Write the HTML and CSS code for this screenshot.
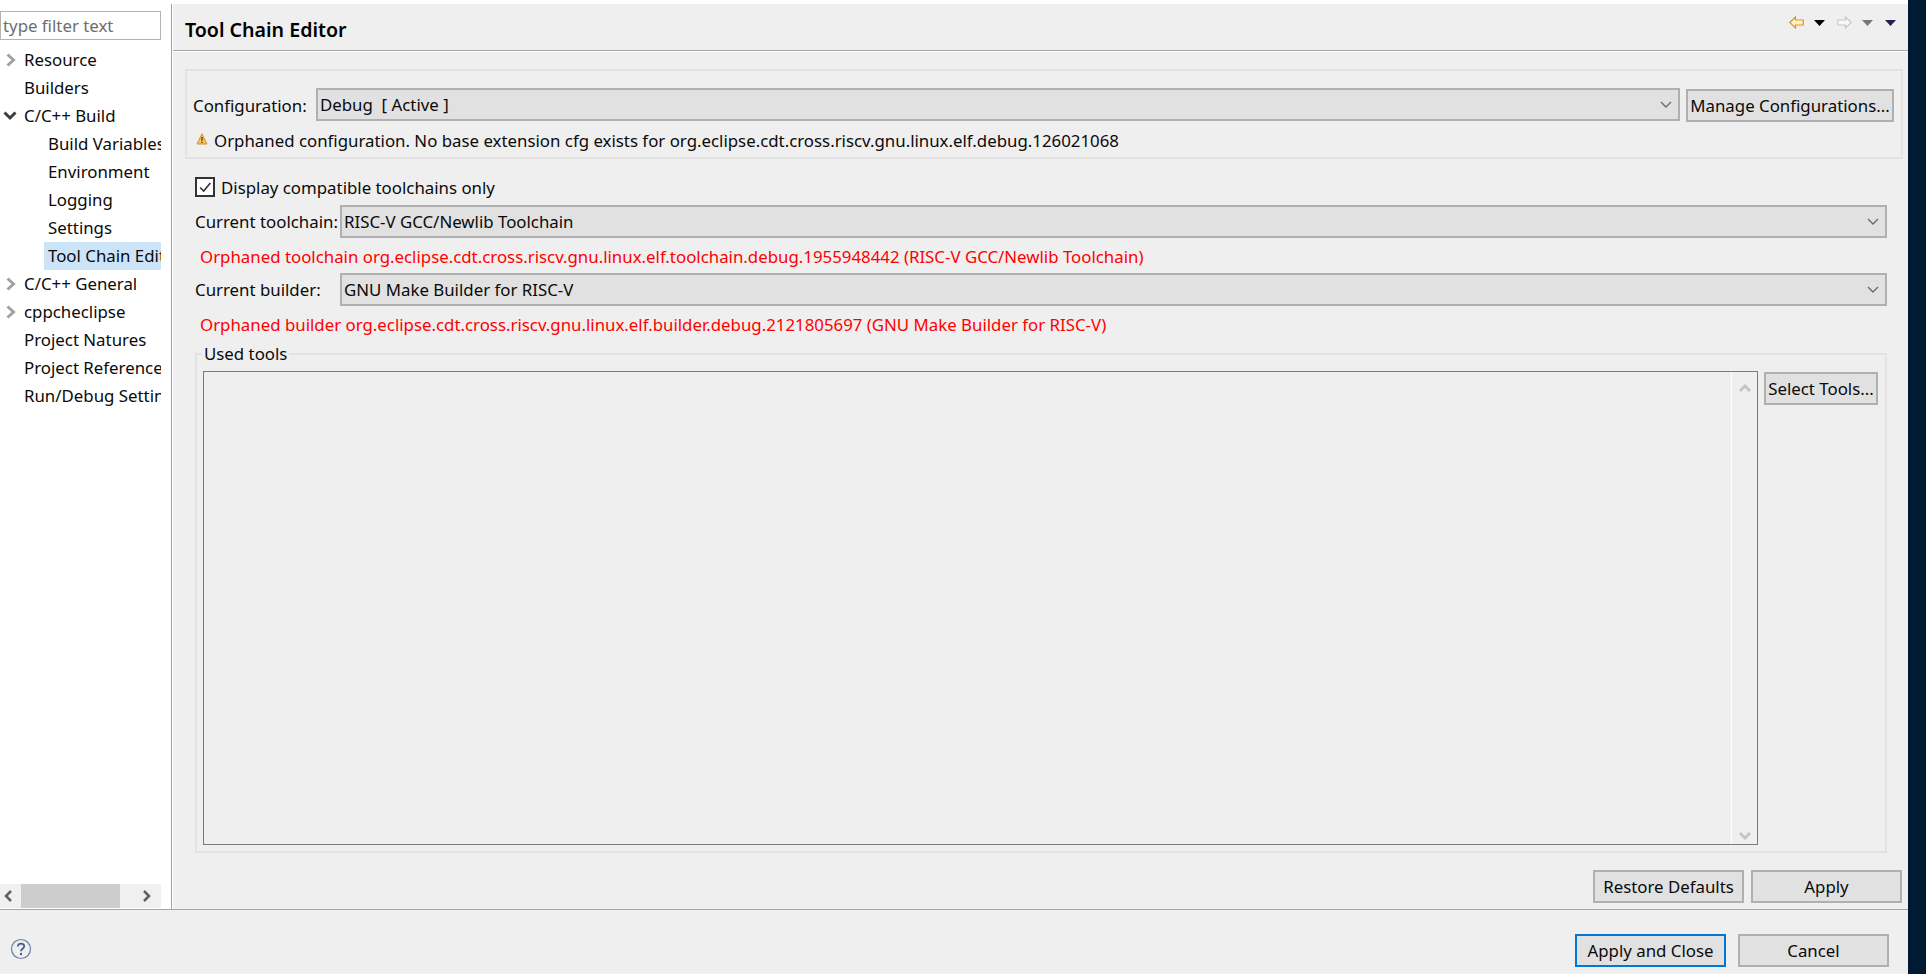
FILE: index.html
```html
<!DOCTYPE html>
<html lang="en">
<head>
<meta charset="utf-8">
<title>Tool Chain Editor</title>
<link rel="stylesheet" href="styles.css">
</head>
<body>
<div class="window">
  <div class="main">
    <aside class="side">
      <div class="filter">type filter text</div>
      <ul class="tree">
        <li class="row"><svg class="twist" viewBox="0 0 12 14"><path d="M2.500 1.500 8.500 7l-6 5.500" /></svg><span>Resource</span></li>
        <li class="row"><span>Builders</span></li>
        <li class="row"><svg class="twist open" viewBox="0 0 14 12"><path d="M1.500 2.500 7 8l5.500-5.500" /></svg><span>C/C++ Build</span></li>
        <li class="row child"><span>Build Variables</span></li>
        <li class="row child"><span>Environment</span></li>
        <li class="row child"><span>Logging</span></li>
        <li class="row child"><span>Settings</span></li>
        <li class="row child selected"><span>Tool Chain Editor</span></li>
        <li class="row"><svg class="twist" viewBox="0 0 12 14"><path d="M2.500 1.500 8.500 7l-6 5.500" /></svg><span>C/C++ General</span></li>
        <li class="row"><svg class="twist" viewBox="0 0 12 14"><path d="M2.500 1.500 8.500 7l-6 5.500" /></svg><span>cppcheclipse</span></li>
        <li class="row"><span>Project Natures</span></li>
        <li class="row"><span>Project References</span></li>
        <li class="row"><span>Run/Debug Settings</span></li>
      </ul>
      <div class="hscroll">
        <svg class="harrow left" viewBox="0 0 10 12"><path d="M8 1 3 6l5 5" /></svg>
        <div class="hthumb"></div>
        <svg class="harrow right" viewBox="0 0 10 12"><path d="M2 1l5 5-5 5" /></svg>
      </div>
    </aside>
    <main class="page">
      <header class="head">
        <h1 class="title">Tool Chain Editor</h1>
        <nav class="nav">
          <svg class="arrow" viewBox="0 0 15 13"><path class="back" d="M.8 6.500 6.500 1v3h7.700v5H6.500v3z" /></svg>
          <svg class="tri" viewBox="0 0 11 6"><path class="tri-black" d="M0 0h11L5.500 6z" /></svg>
          <svg class="arrow" viewBox="0 0 15 13"><path class="fwd" d="M14.200 6.500 8.500 1v3H.8v5h7.700v3z" /></svg>
          <svg class="tri" viewBox="0 0 11 6"><path class="tri-grey" d="M0 0h11L5.500 6z" /></svg>
          <svg class="tri menu" viewBox="0 0 11 6"><path class="tri-purple" d="M0 0h11L5.500 6z" /></svg>
        </nav>
      </header>
      <div class="content">
        <section class="config">
          <div class="config-row">
            <label class="config-label">Configuration:</label>
            <div class="combo config-combo"><span>Debug&nbsp; [ Active ]</span><svg class="caret" viewBox="0 0 12 7"><path d="M1 1l5 5 5-5" /></svg></div>
            <button class="btn manage">Manage Configurations...</button>
          </div>
          <div class="warn-row">
            <svg class="warn" viewBox="0 0 12 12"><path class="warn-fill" d="M6 .8 11 11H1z" /><path class="warn-mark" d="M6 4v3.800M6 8.800v1.200" /></svg>
            <span>Orphaned configuration. No base extension cfg exists for org.eclipse.cdt.cross.riscv.gnu.linux.elf.debug.126021068</span>
          </div>
        </section>
        <div class="form">
          <div class="check-row">
            <span class="check"><svg viewBox="0 0 18 18"><path d="M3.500 9.500 7.500 13.500 15 4.500" /></svg></span>
            <span class="check-text">Display compatible toolchains only</span>
          </div>
          <div class="field">
            <label>Current toolchain:</label>
            <div class="combo"><span>RISC-V GCC/Newlib Toolchain</span><svg class="caret" viewBox="0 0 12 7"><path d="M1 1l5 5 5-5" /></svg></div>
          </div>
          <div class="error">Orphaned toolchain org.eclipse.cdt.cross.riscv.gnu.linux.elf.toolchain.debug.1955948442 (RISC-V GCC/Newlib Toolchain)</div>
          <div class="field">
            <label>Current builder:</label>
            <div class="combo"><span>GNU Make Builder for RISC-V</span><svg class="caret" viewBox="0 0 12 7"><path d="M1 1l5 5 5-5" /></svg></div>
          </div>
          <div class="error">Orphaned builder org.eclipse.cdt.cross.riscv.gnu.linux.elf.builder.debug.2121805697 (GNU Make Builder for RISC-V)</div>
          <fieldset class="tools">
            <legend>Used tools</legend>
            <div class="tools-inner">
              <div class="listbox">
                <div class="list-area"></div>
                <div class="vscroll">
                  <svg class="varrow" viewBox="0 0 12 8"><path d="M1 7l5-5 5 5" /></svg>
                  <svg class="varrow" viewBox="0 0 12 8"><path d="M1 1l5 5 5-5" /></svg>
                </div>
              </div>
              <button class="btn select">Select Tools...</button>
            </div>
          </fieldset>
        </div>
        <div class="page-actions">
          <button class="btn wide">Restore Defaults</button>
          <button class="btn wide">Apply</button>
        </div>
      </div>
    </main>
  </div>
  <footer class="footer">
    <svg class="help" viewBox="0 0 22 22"><circle class="help-ring" cx="11" cy="11" r="9.500" /><path class="help-q" d="M7.800 8.500C8 6.500 9.400 5.600 11 5.600c1.900 0 3.200 1.100 3.200 2.700 0 2.400-3.200 2.500-3.200 5" /><circle class="help-dot" cx="11" cy="16" r="1.200" /></svg>
    <div class="dialog-actions">
      <button class="btn wide default">Apply and Close</button>
      <button class="btn wide">Cancel</button>
    </div>
  </footer>
</div>
</body>
</html>
```
FILE: styles.css
```css
* { box-sizing: border-box; }
html, body { margin: 0; height: 100%; overflow: hidden; }
body {
  background: #001a33;
  font-family: "Noto Sans", "Open Sans", sans-serif;
  font-size: 16.84px;
  color: #0a0a0a;
}
.window {
  width: 1908px;
  height: 974px;
  background: #efefef;
  border-top: 4px solid #fff;
  display: flex;
  flex-direction: column;
}
.main { display: flex; height: 905px; }

/* Sidebar */
.side {
  width: 173px;
  flex: none;
  background: #fff;
  border-right: 1px solid #fff;
  box-shadow: inset -1px 0 0 #a0a0a0;
  padding-top: 7px;
  display: flex;
  flex-direction: column;
}
.filter {
  width: 161px;
  height: 29px;
  border: 1px solid #b4b4b4;
  color: #6d6d6d;
  padding-left: 2px;
  line-height: 28px;
  white-space: nowrap;
  overflow: hidden;
}
.tree { list-style: none; margin: 6px 0 0; padding: 0; width: 161px; overflow: hidden; }
.row {
  height: 28px;
  line-height: 27px;
  padding-left: 24px;
  position: relative;
  white-space: nowrap;
  overflow: hidden;
}
.row.child { padding-left: 48px; }
.row.selected { margin-left: 44px; padding-left: 4px; background: #cce4f8; }
.twist {
  position: absolute;
  left: 5px;
  top: 7px;
  width: 12px;
  height: 14px;
  fill: none;
  stroke: #a2a2a2;
  stroke-width: 3;
}
.twist.open {
  left: 3px;
  top: 8px;
  width: 14px;
  height: 12px;
  stroke: #3c3c3c;
}
.hscroll {
  margin-top: auto;
  margin-bottom: 1px;
  width: 161px;
  height: 24px;
  background: #f0f0f0;
  display: flex;
  align-items: center;
}
.hthumb { width: 99px; height: 24px; background: #cdcdcd; flex: none; }
.harrow {
  width: 10px;
  height: 12px;
  flex: none;
  fill: none;
  stroke: #606060;
  stroke-width: 2.500;
}
.harrow.left { margin: 0 8px 0 3px; }
.harrow.right { margin-left: 22px; }

/* Page */
.page { flex: 1; min-width: 0; display: flex; flex-direction: column; }
.head {
  height: 47px;
  flex: none;
  display: flex;
  align-items: center;
  justify-content: space-between;
  padding: 0 12px 0 12px;
  border-bottom: 1px solid #a8a8a8;
  box-shadow: 0 1px 0 #fff;
}
.title { margin: 0; font-size: 19.6px; font-weight: 600; line-height: 26px; color: #000; padding-top: 6px; }
.nav { display: flex; align-items: center; align-self: flex-start; margin-top: 12px; }
.arrow { width: 15px; height: 13px; }
.tri { width: 11px; height: 6px; margin: 0 12px 0 10px; }
.tri.menu { margin: 0; }
.back { fill: #fff2cf; stroke: #d9971f; stroke-width: 1.200; }
.fwd { fill: #f8f8f8; stroke: #c8c8c8; stroke-width: 1.200; }
.tri-black { fill: #000; }
.tri-grey { fill: #777; }
.tri-purple { fill: #2c1c50; }

.content { flex: 1; display: flex; flex-direction: column; padding: 18px 5px 0 12px; min-height: 0; }
.config {
  height: 90px;
  flex: none;
  border: 2px solid #e2e2e2;
  padding: 16px 7px 0 6px;
}
.config-row { display: flex; align-items: center; height: 35px; }
.config-label { width: 123px; flex: none; padding-top: 1px; }
.combo {
  flex: 1;
  min-width: 0;
  height: 33px;
  background: #e1e1e1;
  border: 2px solid #b0b0b0;
  display: flex;
  align-items: center;
  justify-content: space-between;
  padding: 0 6px 0 2px;
  white-space: nowrap;
}
.config-combo { margin-right: 6px; margin-top: -1px; }
.caret { width: 12px; height: 7px; fill: none; stroke: #6a6a6a; stroke-width: 1.400; }
.btn {
  font: inherit;
  color: inherit;
  height: 33px;
  background: #e1e1e1;
  border: 2px solid #b0b0b0;
  padding: 0;
  white-space: nowrap;
}
.manage { width: 208px; flex: none; margin-top: 1px; }
.warn-row { display: flex; align-items: center; height: 30px; padding-left: 3px; margin-top: 3px; white-space: nowrap; }
.warn { width: 12px; height: 12px; margin-right: 6px; margin-top: -2px; }
.warn-fill { fill: #f5c466; stroke: #d8912a; stroke-width: 1; stroke-linejoin: round; }
.warn-mark { fill: none; stroke: #5a3a00; stroke-width: 1.300; }

.form { flex: none; margin: 0 16px 0 10px; }
.check-row { display: flex; align-items: center; height: 22px; margin-top: 17px; }
.check {
  width: 20px;
  height: 20px;
  border: 2px solid #333;
  background: #fff;
  margin-right: 6px;
  display: flex;
}
.check-text { line-height: 24px; padding-top: 1px; }
.check svg { width: 16px; height: 16px; fill: none; stroke: #333; stroke-width: 1.800; }
.field { display: flex; align-items: center; height: 33px; }
.check-row + .field { margin-top: 7px; }
.field label { width: 145px; flex: none; }
.error { height: 35px; line-height: 38px; padding-left: 5px; color: #ff0000; white-space: nowrap; }
.tools {
  margin: 1px 0 0;
  padding: 0 7px 5px 6px;
  height: 511px;
  border: 2px solid #e2e2e2;
  min-width: 0;
}
.tools legend { padding: 0 2px; margin-left: -1px; line-height: 24px; height: 24px; }
.tools-inner { display: flex; align-items: flex-start; padding-top: 5px; height: 480px; }
.listbox {
  width: 1555px;
  height: 474px;
  flex: none;
  border: 1px solid #7a7a7a;
  display: flex;
}
.list-area { flex: 1; border-right: 1px solid #fff; }
.vscroll {
  width: 25px;
  display: flex;
  flex-direction: column;
  justify-content: space-between;
  align-items: center;
  padding: 12px 0 4px;
}
.varrow { width: 12px; height: 8px; fill: none; stroke: #c4c4c4; stroke-width: 2.800; }
.select { width: 114px; margin-left: 6px; margin-top: 1px; }
.page-actions { display: flex; justify-content: flex-end; gap: 7px; margin-top: 17px; padding-right: 1px; }
.wide { width: 151px; }

/* Footer */
.footer {
  flex: 1;
  background: #efefef;
  border-top: 1px solid #a6a6a6;
  display: flex;
  align-items: flex-start;
  justify-content: space-between;
  padding: 24px 19px 0 10px;
}
.help { width: 22px; height: 22px; margin-top: 4px; }
.help-ring { fill: none; stroke: #6a7fa3; stroke-width: 1.200; }
.help-q { fill: none; stroke: #47608a; stroke-width: 1.800; }
.help-dot { fill: #47608a; }
.dialog-actions { display: flex; gap: 12px; }
.default { border-color: #0078d7; }
```
